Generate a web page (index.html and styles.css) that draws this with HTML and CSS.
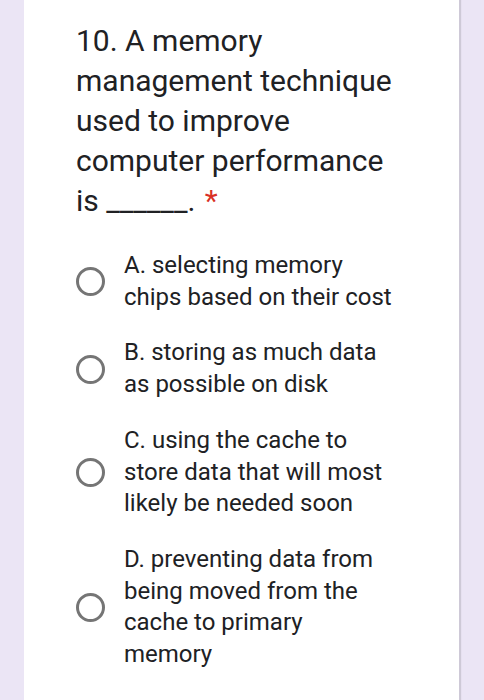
FILE: index.html
```html
<!DOCTYPE html>
<html lang="en">
<head>
  <meta charset="UTF-8">
  <title>Question 10</title>
  <link rel="stylesheet" href="styles.css">
</head>
<body>

  <div class="card">
    <div class="question">10. A memory management technique used to improve computer performance is ______. <span class="required">*</span></div>

    <div class="options">
      <label class="option">
        <span class="radio"></span>
        <span class="option-text">A. selecting memory chips based on their cost</span>
      </label>
      <label class="option">
        <span class="radio"></span>
        <span class="option-text">B. storing as much data as possible on disk</span>
      </label>
      <label class="option">
        <span class="radio"></span>
        <span class="option-text">C. using the cache to store data that will most likely be needed soon</span>
      </label>
      <label class="option">
        <span class="radio"></span>
        <span class="option-text">D. preventing data from being moved from the cache to primary memory</span>
      </label>
    </div>
  </div>

</body>
</html>
```

FILE: styles.css
```css
html, body {
  height: 100%;
}

body {
  margin: 0;
  padding: 0 25px 0 24px;
  background: #ebe5f5;
  font-family: Roboto, "Liberation Sans", Arial, sans-serif;
  color: #202124;
}

.card {
  background: white;
  min-height: 100%;
  box-sizing: border-box;
  padding: 21px 64px 30px 52px;
  box-shadow: 2px 0 1px rgba(0,0,0,0.12);
}

.question {
  font-size: 30px;
  line-height: 40px;
}

.required {
  color: #d93025;
  margin-left: 2px;
}

.options {
  display: flex;
  flex-direction: column;
  gap: 24px;
  margin-top: 29px;
}

.option {
  display: flex;
  align-items: center;
  gap: 19px;
}

.radio {
  flex: none;
  width: 23px;
  height: 23px;
  border: 3px solid #757575;
  border-radius: 50%;
}

.option-text {
  font-size: 24px;
  line-height: 31.7px;
}
```
